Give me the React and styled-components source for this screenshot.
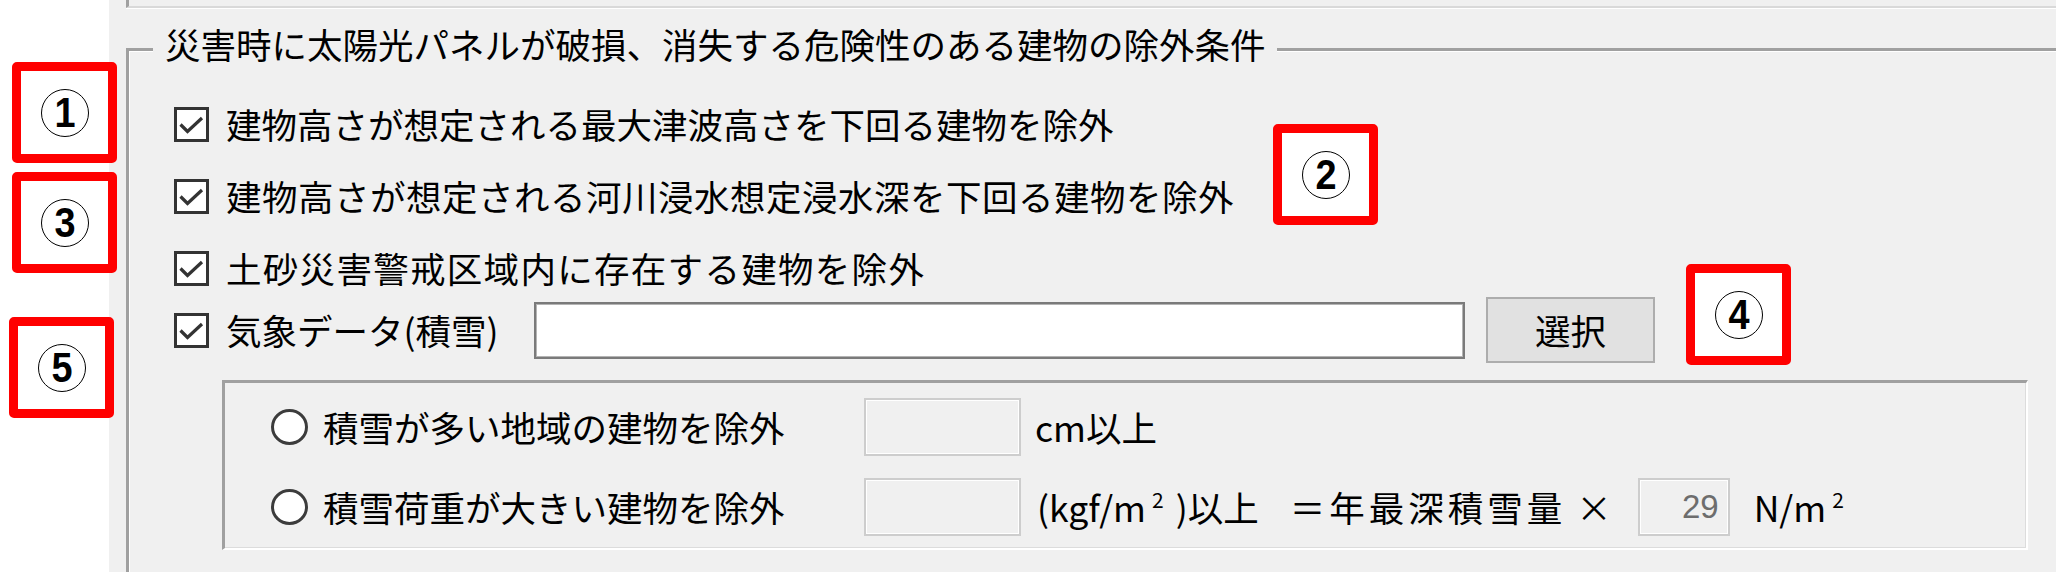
import React from "react";
import styled, { createGlobalStyle } from "styled-components";

const GlobalStyle = createGlobalStyle`
  html, body { margin: 0; padding: 0; background: #fff; }
  * { box-sizing: border-box; }
`;

const FONT = `"Noto Sans CJK JP", "Noto Sans", sans-serif`;
const LINE = "#a0a0a0";

const Root = styled.div`
  position: relative;
  display: flex;
  width: 2056px;
  height: 572px;
  overflow: hidden;
  background: #fff;
  font-family: ${FONT};
  color: #000;
`;

const Margin = styled.div`
  flex: none;
  width: 109px;
  background: #fff;
`;

const Panel = styled.div`
  flex: 1;
  min-width: 0;
  display: flex;
  flex-direction: column;
  padding-left: 17px;
  background: #f0f0f0;
`;

const PrevGroupEnd = styled.div`
  flex: none;
  height: 8px;
  border-left: 3px solid ${LINE};
  border-bottom: 2px solid #d9d9d9;
  box-shadow: 0 1px 0 #fff;
`;

const Group = styled.section`
  margin-top: 18px;
  display: flex;
  flex-direction: column;
  flex: 1;
`;

const GroupHeader = styled.div`
  display: flex;
  height: 36px;
`;

const HeaderCorner = styled.span`
  flex: none;
  width: 27px;
  margin-top: 22px;
  border-top: 3px solid ${LINE};
  border-left: 3px solid ${LINE};
  box-shadow: inset 1px 1px 0 #fff;
`;

const HeaderLine = styled.span`
  flex: 1;
  margin-top: 22px;
  border-top: 3px solid ${LINE};
  box-shadow: inset 0 1px 0 #fff;
`;

const GroupTitle = styled.h2`
  margin: 0;
  padding: 0 11px 0 12px;
  font-size: 35.5px;
  font-weight: 400;
  line-height: 36px;
  white-space: nowrap;
`;

const GroupBody = styled.div`
  flex: 1;
  display: flex;
  flex-direction: column;
  padding: 44px 0 0 45px;
  border-left: 3px solid ${LINE};
  box-shadow: inset 1px 0 0 #fff;
`;

const CheckRow = styled.div`
  display: flex;
  align-items: center;
  height: ${(p) => p.$height || 36}px;
  margin-top: ${(p) => p.$gap || 0}px;
`;

const CheckBox = styled.span`
  flex: none;
  display: flex;
  align-items: center;
  justify-content: center;
  width: 35px;
  height: 35px;
  border: 3px solid #333;
  background: #fff;
  svg { display: block; }
`;

const Label = styled.span`
  flex: none;
  margin-left: ${(p) => p.$gap ?? 17}px;
  width: ${(p) => (p.$width ? `${p.$width}px` : "auto")};
  font-size: 35.5px;
  line-height: 36px;
  letter-spacing: ${(p) => p.$spacing || 0}px;
  white-space: nowrap;
`;

const PathField = styled.div`
  flex: none;
  width: 931px;
  height: 57px;
  background: #fff;
  border: 2px solid #7a7a7a;
  box-shadow: inset 0 0 0 1px #b4b4b4;
`;

const SelectButton = styled.button`
  flex: none;
  margin-left: 21px;
  width: 169px;
  height: 66px;
  padding: 0;
  background: #e1e1e1;
  border: 2px solid #adadad;
  font-family: ${FONT};
  font-size: 35.5px;
  line-height: 36px;
  color: #000;
`;

const InnerFrame = styled.div`
  flex: none;
  width: 1806px;
  height: 170px;
  margin: 17px 0 0 48px;
  padding: 15px 0 0 46px;
  display: flex;
  flex-direction: column;
  border-top: 3px solid ${LINE};
  border-left: 3px solid ${LINE};
  border-right: 2px solid #fff;
  border-bottom: 2px solid #fff;
  box-shadow: inset -1px -1px 0 #dcdcdc;
`;

const RadioRow = styled.div`
  display: flex;
  align-items: center;
  height: 58px;
  margin-top: ${(p) => p.$gap || 0}px;
`;

const RadioChoice = styled.span`
  flex: none;
  display: flex;
  align-items: center;
  width: 593px;
`;

const Radio = styled.span`
  flex: none;
  width: 37px;
  height: 36px;
  border-radius: 50%;
  border: 3px solid #3c3c3c;
  background: #fff;
`;

const Text = styled.span`
  flex: none;
  margin-left: ${(p) => p.$gap || 0}px;
  font-size: 35.5px;
  line-height: 36px;
  letter-spacing: ${(p) => p.$spacing || 0}px;
  white-space: nowrap;
  sup {
    font-size: 21px;
    line-height: 0;
    vertical-align: 14px;
    margin: 0 12px 0 6px;
  }
`;

const NumberField = styled.div`
  flex: none;
  margin-left: ${(p) => p.$gap || 0}px;
  width: ${(p) => p.$width}px;
  height: 58px;
  display: flex;
  align-items: center;
  justify-content: flex-end;
  padding-right: 9px;
  background: #f0f0f0;
  border: 2px solid #cdcdcd;
  box-shadow: inset 0 0 0 1px #fff;
  color: #6d6d6d;
  font-family: "Liberation Sans", Arial, sans-serif;
  font-size: 33px;
`;

const Annotation = styled.div`
  position: absolute;
  left: ${(p) => p.$x}px;
  top: ${(p) => p.$y}px;
  width: 105px;
  height: 101px;
  display: flex;
  align-items: center;
  justify-content: center;
  background: #fff;
  border: 9px solid #ff0000;
  border-radius: 5px;
`;

const CircledNumber = styled.span`
  display: flex;
  align-items: center;
  justify-content: center;
  width: 48px;
  height: 48px;
  border: 1.5px solid #000;
  border-radius: 50%;
  font-family: "Liberation Sans", Arial, sans-serif;
  font-weight: 700;
  font-size: 43px;
  line-height: 1;
`;

const Digit = styled.span`
  display: block;
  transform: scaleX(0.88);
`;

const CheckMark = () => (
  <svg width="29" height="29" viewBox="0 0 29 29">
    <path d="M3.5 14.5 L10.5 21.5 L25 8" fill="none" stroke="#333" strokeWidth="3.2" />
  </svg>
);

const checks = [
  { text: "建物高さが想定される最大津波高さを下回る建物を除外", gap: 0, spacing: 0 },
  { text: "建物高さが想定される河川浸水想定浸水深を下回る建物を除外", gap: 36, spacing: 0.5 },
  { text: "土砂災害警戒区域内に存在する建物を除外", gap: 36, spacing: 1.3 },
];

const annotations = [
  { n: "1", x: 12, y: 62 },
  { n: "3", x: 12, y: 172 },
  { n: "5", x: 9, y: 317 },
  { n: "2", x: 1273, y: 124 },
  { n: "4", x: 1686, y: 264 },
];

export default function App() {
  return (
    <>
      <GlobalStyle />
      <Root>
        <Margin />
        <Panel>
          <PrevGroupEnd />
          <Group>
            <GroupHeader>
              <HeaderCorner />
              <GroupTitle>災害時に太陽光パネルが破損、消失する危険性のある建物の除外条件</GroupTitle>
              <HeaderLine />
            </GroupHeader>
            <GroupBody>
              {checks.map((c) => (
                <CheckRow key={c.text} $gap={c.gap}>
                  <CheckBox>
                    <CheckMark />
                  </CheckBox>
                  <Label $spacing={c.spacing}>{c.text}</Label>
                </CheckRow>
              ))}
              <CheckRow $gap={11} $height={66}>
                <CheckBox>
                  <CheckMark />
                </CheckBox>
                <Label $width={308}>気象データ(積雪)</Label>
                <PathField />
                <SelectButton type="button">選択</SelectButton>
              </CheckRow>
              <InnerFrame>
                <RadioRow>
                  <RadioChoice>
                    <Radio />
                    <Text $gap={15}>積雪が多い地域の建物を除外</Text>
                  </RadioChoice>
                  <NumberField $width={157} />
                  <Text $gap={14}>cm以上</Text>
                </RadioRow>
                <RadioRow $gap={22}>
                  <RadioChoice>
                    <Radio />
                    <Text $gap={15}>積雪荷重が大きい建物を除外</Text>
                  </RadioChoice>
                  <NumberField $width={157} />
                  <Text $gap={16}>
                    (kgf/m<sup>2</sup>)以上
                  </Text>
                  <Text $gap={31} $spacing={4}>＝年最深積雪量</Text>
                  <Text $gap={10}>×</Text>
                  <NumberField $gap={26} $width={92}>29</NumberField>
                  <Text $gap={24}>
                    N/m<sup>2</sup>
                  </Text>
                </RadioRow>
              </InnerFrame>
            </GroupBody>
          </Group>
        </Panel>
        {annotations.map((a) => (
          <Annotation key={a.n} $x={a.x} $y={a.y}>
            <CircledNumber>
              <Digit>{a.n}</Digit>
            </CircledNumber>
          </Annotation>
        ))}
      </Root>
    </>
  );
}
